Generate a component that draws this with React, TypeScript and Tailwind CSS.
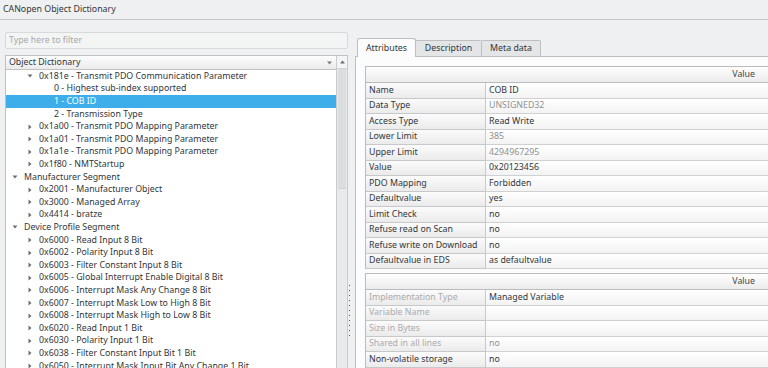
import React from 'react';

type TreeNode = {
  label: string;
  level: 0 | 1 | 2;
  arrow?: 'open' | 'closed';
  selected?: boolean;
};

const tree: TreeNode[] = [
  { label: '0x181e - Transmit PDO Communication Parameter', level: 1, arrow: 'open' },
  { label: '0 - Highest sub-index supported', level: 2 },
  { label: '1 - COB ID', level: 2, selected: true },
  { label: '2 - Transmission Type', level: 2 },
  { label: '0x1a00 - Transmit PDO Mapping Parameter', level: 1, arrow: 'closed' },
  { label: '0x1a01 - Transmit PDO Mapping Parameter', level: 1, arrow: 'closed' },
  { label: '0x1a1e - Transmit PDO Mapping Parameter', level: 1, arrow: 'closed' },
  { label: '0x1f80 - NMTStartup', level: 1, arrow: 'closed' },
  { label: 'Manufacturer Segment', level: 0, arrow: 'open' },
  { label: '0x2001 - Manufacturer Object', level: 1, arrow: 'closed' },
  { label: '0x3000 - Managed Array', level: 1, arrow: 'closed' },
  { label: '0x4414 - bratze', level: 1, arrow: 'closed' },
  { label: 'Device Profile Segment', level: 0, arrow: 'open' },
  { label: '0x6000 - Read Input 8 Bit', level: 1, arrow: 'closed' },
  { label: '0x6002 - Polarity Input 8 Bit', level: 1, arrow: 'closed' },
  { label: '0x6003 - Filter Constant Input 8 Bit', level: 1, arrow: 'closed' },
  { label: '0x6005 - Global Interrupt Enable Digital 8 Bit', level: 1, arrow: 'closed' },
  { label: '0x6006 - Interrupt Mask Any Change 8 Bit', level: 1, arrow: 'closed' },
  { label: '0x6007 - Interrupt Mask Low to High 8 Bit', level: 1, arrow: 'closed' },
  { label: '0x6008 - Interrupt Mask High to Low 8 Bit', level: 1, arrow: 'closed' },
  { label: '0x6020 - Read Input 1 Bit', level: 1, arrow: 'closed' },
  { label: '0x6030 - Polarity Input 1 Bit', level: 1, arrow: 'closed' },
  { label: '0x6038 - Filter Constant Input Bit 1 Bit', level: 1, arrow: 'closed' },
  { label: '0x6050 - Interrupt Mask Input Bit Any Change 1 Bit', level: 1, arrow: 'closed' },
];

type Row = { label: string; value: string; labelDim?: boolean; valueDim?: boolean };

const attributes: Row[] = [
  { label: 'Name', value: 'COB ID' },
  { label: 'Data Type', value: 'UNSIGNED32', valueDim: true },
  { label: 'Access Type', value: 'Read Write' },
  { label: 'Lower Limit', value: '385', valueDim: true },
  { label: 'Upper Limit', value: '4294967295', valueDim: true },
  { label: 'Value', value: '0x20123456' },
  { label: 'PDO Mapping', value: 'Forbidden' },
  { label: 'Defaultvalue', value: 'yes' },
  { label: 'Limit Check', value: 'no' },
  { label: 'Refuse read on Scan', value: 'no' },
  { label: 'Refuse write on Download', value: 'no' },
  { label: 'Defaultvalue in EDS', value: 'as defaultvalue' },
];

const implementation: Row[] = [
  { label: 'Implementation Type', value: 'Managed Variable', labelDim: true },
  { label: 'Variable Name', value: '', labelDim: true },
  { label: 'Size in Bytes', value: '', labelDim: true },
  { label: 'Shared in all lines', value: 'no', labelDim: true, valueDim: true },
  { label: 'Non-volatile storage', value: 'no' },
];

const Arrow: React.FC<{ dir: 'open' | 'closed'; light?: boolean }> = ({ dir, light }) => (
  <svg width="6" height="6" viewBox="0 0 6 6" className="ml-[3px]">
    {dir === 'open' ? (
      <path d="M0.5 1.5 L5.5 1.5 L3 4.5 Z" fill={light ? '#ffffff' : '#6b6e71'} />
    ) : (
      <path d="M1.5 0.5 L4.5 3 L1.5 5.5 Z" fill={light ? '#ffffff' : '#6b6e71'} />
    )}
  </svg>
);

const TreeRow: React.FC<{ node: TreeNode }> = ({ node }) => {
  const pad = node.level === 0 ? 'pl-[3px]' : node.level === 1 ? 'pl-[18px]' : 'pl-[33px]';
  return (
    <div
      className={`h-[12.6px] shrink-0 flex items-center whitespace-nowrap ${pad} ${
        node.selected ? 'bg-[#3daee9] text-white' : ''
      }`}
    >
      <div className="w-[15px] shrink-0 flex items-center">
        {node.arrow && <Arrow dir={node.arrow} light={node.selected} />}
      </div>
      <span>{node.label}</span>
    </div>
  );
};

const PropTable: React.FC<{ rows: Row[]; className?: string }> = ({ rows, className }) => (
  <div className={`border-t border-l border-[#b9bbbd] ${className ?? ''}`}>
    <div className="h-[16px] flex items-center justify-end pr-[13px] bg-linear-to-b from-[#fefefe] to-[#ececec] border-b border-[#b9bbbd] text-[#45494c]">
      Value
    </div>
    {rows.map((r) => (
      <div key={r.label} className="h-[15.5px] grid grid-cols-[120px_1fr]">
        <div
          className={`flex items-center pl-[3px] whitespace-nowrap bg-linear-to-b from-[#fbfbfb] to-[#ebebeb] border-r border-b border-[#c6c8ca] ${
            r.labelDim ? 'text-[#a9abad]' : 'text-[#31363b]'
          }`}
        >
          {r.label}
        </div>
        <div
          className={`flex items-center pl-[3px] whitespace-nowrap bg-linear-to-b from-[#ffffff] to-[#f3f3f3] border-b border-[#cfd1d3] ${
            r.valueDim ? 'text-[#8e9194]' : 'text-[#31363b]'
          }`}
        >
          {r.value}
        </div>
      </div>
    ))}
  </div>
);

export default function App() {
  return (
    <div className="w-[768px] h-[368px] overflow-hidden bg-[#eff0f1] text-[#31363b] font-['Noto_Sans',sans-serif] text-[8.8px] leading-none flex flex-col">
      <div className="h-[20px] shrink-0 border-b border-[#c4c6c8] flex items-center pl-[3px]">
        CANopen Object Dictionary
      </div>

      <div className="flex-1 flex min-h-0">
        {/* left: filter + tree */}
        <div className="w-[343px] ml-[5px] shrink-0 flex flex-col pt-[12px]">
          <div className="h-[17px] shrink-0 border border-[#d8d9da] rounded-[2px] bg-[#f3f4f4] flex items-center pl-[3px] text-[#a7a9ab]">
            Type here to filter
          </div>
          <div className="mt-[6px] flex-1 flex border-t border-l border-[#bfc1c3] bg-white min-h-0">
            <div className="flex-1 flex flex-col min-w-0 overflow-hidden">
              <div className="h-[14px] shrink-0 flex items-center justify-between pl-[3px] pr-[4px] bg-linear-to-b from-[#fdfdfd] to-[#ebebeb] border-b border-[#c0c2c4]">
                <span>Object Dictionary</span>
                <svg width="5" height="4" viewBox="0 0 5 4">
                  <path d="M0 0.5 L5 0.5 L2.5 3.5 Z" fill="#7b7e81" />
                </svg>
              </div>
              {tree.map((n) => (
                <TreeRow key={n.label} node={n} />
              ))}
            </div>
            <div className="w-[12px] shrink-0 flex flex-col border-l border-r border-[#c8cacc] bg-[#e9eaeb]">
              <div className="h-[13px] shrink-0 flex items-center justify-center bg-[#f4f5f5] border-b border-[#d0d2d4]">
                <svg width="5" height="4" viewBox="0 0 5 4">
                  <path d="M0 3.5 L5 3.5 L2.5 0.5 Z" fill="#6b6e71" />
                </svg>
              </div>
              <div className="h-[120px] mx-[1px] bg-[#dcdddf] border-b border-[#cfd1d3]" />
            </div>
          </div>
        </div>

        {/* splitter */}
        <div className="w-[7px] shrink-0 flex flex-col items-start pl-[1px] pt-[265px] gap-[4px]">
          {Array.from({ length: 11 }).map((_, i) => (
            <div key={i} className="w-[1px] h-[1px] bg-[#4d5053]" />
          ))}
        </div>

        {/* right: tabs */}
        <div className="flex-1 min-w-0 flex flex-col pt-[18px]">
          <div className="h-[19px] shrink-0 flex items-end pl-[2px] relative z-10 -mb-px">
            <div className="w-[59px] h-[19px] flex items-center justify-center bg-[#fcfcfc] border-t border-l border-r border-[#bcbebf] rounded-t-[3px]">
              Attributes
            </div>
            <div className="w-[66px] h-[17px] flex items-center justify-center bg-[#e3e5e7] border-t border-r border-b border-[#bcbebf] rounded-tr-[2px]">
              Description
            </div>
            <div className="w-[59px] h-[17px] flex items-center justify-center bg-[#e3e5e7] border-t border-r border-b border-[#bcbebf] rounded-tr-[2px]">
              Meta data
            </div>
          </div>
          <div className="flex-1 min-h-0 bg-[#fcfcfc] border-t border-l border-[#bcbebf] pl-[9px] pt-[9px] overflow-hidden">
            <PropTable rows={attributes} />
            <PropTable rows={implementation} className="mt-[4px]" />
          </div>
        </div>
      </div>
    </div>
  );
}
